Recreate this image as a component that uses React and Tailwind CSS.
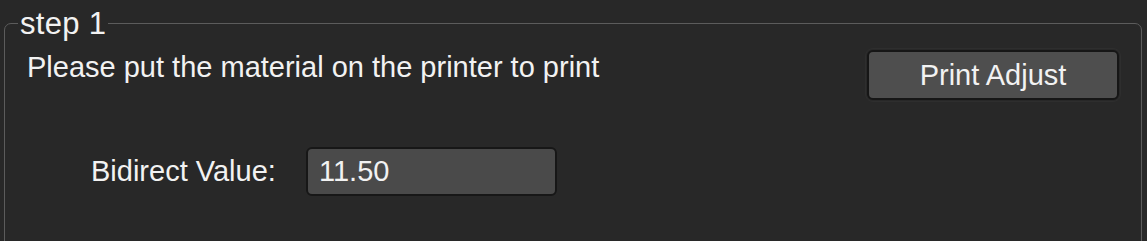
export default function App() {
  return (
    <div className="w-[1147px] h-[241px] overflow-hidden bg-[#282828] text-[#f2f2f2] font-['Liberation_Sans',Arial,sans-serif] text-[29px]">
      <fieldset className="mt-[7px] ml-[4px] mr-[5px] h-[260px] border border-[#5c5c5c] rounded-[7px] px-[22px]">
        <legend className="-ml-[9px] px-[2px] text-[31px] leading-[33px] tracking-[0.3px]">step 1</legend>

        <div className="mt-[10px] flex items-start justify-between">
          <p className="pt-[1px] leading-[33px]">Please put the material on the printer to print</p>
          <button
            type="button"
            className="w-[252px] h-[50px] rounded-[6px] border-2 border-[#161616] bg-[#4e4e4e] text-[#f2f2f2] leading-[33px] outline outline-1 outline-offset-[1px] outline-[#2e2e2e]"
          >
            Print Adjust
          </button>
        </div>

        <div className="mt-[47px] flex items-center">
          <label className="ml-[64px] w-[215px] leading-[33px]">Bidirect Value:</label>
          <input
            type="text"
            defaultValue="11.50"
            className="w-[251px] h-[49px] rounded-[6px] border-2 border-[#171717] bg-[#4a4a4a] pl-[11px] text-[#f2f2f2] leading-[33px] outline-none"
          />
        </div>
      </fieldset>
    </div>
  )
}
